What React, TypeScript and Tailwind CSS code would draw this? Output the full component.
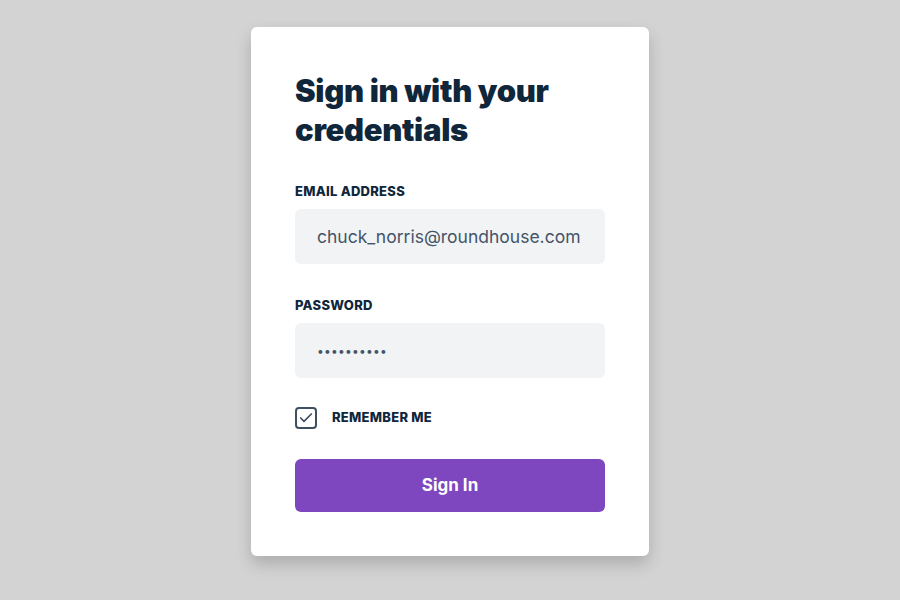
import { Check } from "lucide-react";

export default function App() {
  return (
    <div className="flex h-[600px] w-[900px] items-start justify-center bg-[#d3d3d3] pt-[27px] font-['Inter',sans-serif]">
      <div className="w-[398px] rounded-md bg-white px-[44px] pb-[44px] pt-[44px] shadow-[0_8px_16px_rgba(0,0,0,0.18)]">
        <h1 className="text-[31px] font-black leading-[39px] tracking-[-0.01em] text-[#10263b]">
          Sign in with your credentials
        </h1>

        <form className="mt-[34px]" onSubmit={(e) => e.preventDefault()}>
          <label className="block text-[13px] font-extrabold leading-4 tracking-[0.02em] text-[#10263b]">
            EMAIL ADDRESS
          </label>
          <input
            type="email"
            defaultValue="chuck_norris@roundhouse.com"
            className="mt-[10px] block h-[55px] w-full rounded-md bg-[#f2f3f4] px-[22px] text-[17.5px] text-[#44546a] outline-none"
          />

          <label className="mt-[33px] block text-[13px] font-extrabold leading-4 tracking-[0.02em] text-[#10263b]">
            PASSWORD
          </label>
          <input
            type="password"
            defaultValue="chucknorri"
            className="mt-[10px] block h-[55px] w-full rounded-md bg-[#f2f3f4] px-[22px] text-[12px] tracking-[0.02em] text-[#44546a] outline-none"
          />

          <label className="mt-[29px] flex items-center gap-[15px]">
            <span className="flex h-[22px] w-[22px] items-center justify-center rounded-[4px] border-2 border-[#3f4f62]">
              <Check className="h-[16px] w-[16px] text-[#3f4f62]" strokeWidth={2.5} />
            </span>
            <span className="text-[13px] font-extrabold tracking-[0.02em] text-[#10263b]">REMEMBER ME</span>
          </label>

          <button
            type="submit"
            className="mt-[30px] block h-[53px] w-full rounded-md bg-[#7e47bf] text-[17px] font-bold text-white"
          >
            Sign In
          </button>
        </form>
      </div>
    </div>
  );
}
